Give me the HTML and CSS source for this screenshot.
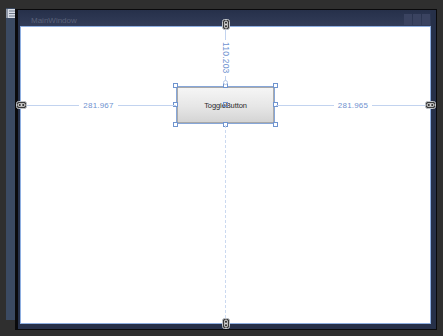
FILE: index.html
```html
<!DOCTYPE html>
<html>
<head>
<meta charset="utf-8">
<link rel="stylesheet" href="styles.css">
</head>
<body>
<div class="stage">
  <div class="side">
    <svg class="side-icon" width="9" height="9" viewBox="0 0 9 9">
      <rect x="0" y="0" width="9" height="9" fill="#d8dde6"/>
      <rect x="0" y="0" width="2" height="9" fill="#8d96a6"/>
      <line x1="3" y1="2" x2="9" y2="2" stroke="#6c7688" stroke-width="1"/>
      <line x1="3" y1="4.5" x2="9" y2="4.5" stroke="#6c7688" stroke-width="1"/>
      <line x1="3" y1="7" x2="9" y2="7" stroke="#6c7688" stroke-width="1"/>
    </svg>
  </div>
  <div class="window">
    <div class="titlebar">
      <span class="title">MainWindow</span>
      <div class="caption-btns"><i></i><i></i><i></i></div>
    </div>
    <div class="client">
      <div class="target">
        <div class="toggle">ToggleButton</div>
        <span class="h h-tl"></span><span class="h h-tc"></span><span class="h h-tr"></span>
        <span class="h h-ml"></span><span class="h h-mr"></span>
        <span class="h h-bl"></span><span class="h h-bc"></span><span class="h h-br"></span>
        <span class="h h-c"></span>
      </div>

      <div class="mline mline-left"><span class="mlabel">281.967</span></div>
      <div class="mline mline-right"><span class="mlabel">281.965</span></div>
      <div class="vline vline-top"><span class="vlabel">110.203</span></div>
      <span class="vdot vdot-top"></span>
      <div class="vline vline-bottom"></div>

      <svg class="anchor anchor-left" width="11" height="8" viewBox="0 0 11 8">
        <rect x="0.5" y="0.5" width="10" height="7" rx="2" fill="#3a3a3a" stroke="#bfc3c8"/>
        <rect x="2" y="2.5" width="4" height="3" rx="1.5" fill="none" stroke="#e6e6e6" stroke-width="1"/>
        <rect x="5" y="2.5" width="4" height="3" rx="1.5" fill="none" stroke="#e6e6e6" stroke-width="1"/>
      </svg>
      <svg class="anchor anchor-right" width="11" height="8" viewBox="0 0 11 8">
        <rect x="0.5" y="0.5" width="10" height="7" rx="2" fill="#3a3a3a" stroke="#bfc3c8"/>
        <rect x="2" y="2.5" width="4" height="3" rx="1.5" fill="none" stroke="#e6e6e6" stroke-width="1"/>
        <rect x="5" y="2.5" width="4" height="3" rx="1.5" fill="none" stroke="#e6e6e6" stroke-width="1"/>
      </svg>
    </div>
  </div>
  <svg class="anchor anchor-top" width="8" height="11" viewBox="0 0 8 11">
    <rect x="0.5" y="0.5" width="7" height="10" rx="2" fill="#3a3a3a" stroke="#bfc3c8"/>
    <rect x="2.5" y="2" width="3" height="4" rx="1.5" fill="none" stroke="#e6e6e6" stroke-width="1"/>
    <rect x="2.5" y="5" width="3" height="4" rx="1.5" fill="none" stroke="#e6e6e6" stroke-width="1"/>
  </svg>
  <svg class="anchor anchor-bottom" width="8" height="11" viewBox="0 0 8 11">
    <rect x="0.5" y="0.5" width="7" height="10" rx="2" fill="#3a3a3a" stroke="#bfc3c8"/>
    <rect x="2.5" y="2" width="3" height="4" rx="1.5" fill="none" stroke="#e6e6e6" stroke-width="1"/>
    <rect x="2.5" y="5" width="3" height="4" rx="1.5" fill="none" stroke="#e6e6e6" stroke-width="1"/>
  </svg>
</div>
</body>
</html>
```
FILE: styles.css
```css
html, body {
  margin: 0;
  padding: 0;
  background: #2f2f2f;
  width: 443px;
  height: 336px;
  overflow: hidden;
  font-family: "Liberation Sans", Arial, sans-serif;
}

.stage {
  position: relative;
  display: flex;
  align-items: flex-start;
  padding: 8px 0 0 6px;
  height: 336px;
  box-sizing: border-box;
}

.side {
  width: 9px;
  height: 312px;
  background: #3b4a62;
  flex: none;
}

.side-icon {
  display: block;
  margin-top: 1px;
}

.window {
  margin-top: 1px;
  width: 422px;
  height: 321px;
  box-sizing: border-box;
  border: 1px solid #0a0a0c;
  border-left-width: 3px;
  background: #263049;
  padding: 0 5px 5px 2px;
  display: flex;
  flex-direction: column;
}

.titlebar {
  height: 16px;
  flex: none;
  display: flex;
  align-items: center;
  justify-content: space-between;
  background: linear-gradient(#26304a, #323c58);
}

.title {
  font-size: 8px;
  color: #5a6179;
  margin-left: 11px;
  margin-top: 4px;
}

.caption-btns {
  display: flex;
  gap: 1px;
  margin-right: 1px;
  margin-top: 3px;
}

.caption-btns i {
  display: block;
  width: 8px;
  height: 11px;
  background: #3a4360;
}

.client {
  position: relative;
  flex: 1;
  background: #ffffff;
  border: 1px solid #8eaee0;
  display: flex;
  justify-content: center;
  padding-top: 59px;
}

.target {
  position: relative;
  width: 99px;
  height: 38px;
}

.toggle {
  box-sizing: border-box;
  width: 100%;
  height: 100%;
  border: 1px solid #86a6d8;
  background: linear-gradient(#f6f6f6, #e6e6e6 55%, #d3d3d3);
  box-shadow: inset 0 0 0 1px #a9a9a9;
  font-size: 7.5px;
  color: #2a2a2a;
  display: flex;
  align-items: center;
  justify-content: center;
  letter-spacing: -0.1px;
}

.h {
  position: absolute;
  width: 3px;
  height: 3px;
  border: 1px solid #6f94cf;
  background: #ffffff;
}

.h-tl { left: -3px; top: -3px; }
.h-tc { left: 47px; top: -3px; }
.h-tr { right: -3px; top: -3px; }
.h-ml { left: -3px; top: 16px; }
.h-mr { right: -3px; top: 16px; }
.h-bl { left: -3px; bottom: -3px; }
.h-bc { left: 47px; bottom: -3px; }
.h-br { right: -3px; bottom: -3px; }
.h-c { left: 47px; top: 16px; background: transparent; }

.mline {
  position: absolute;
  top: 78px;
  height: 1px;
  background: #c2d3ef;
  display: flex;
  align-items: center;
  justify-content: center;
}

.mline-left { left: 0; width: 155px; }
.mline-right { left: 255px; width: 154px; }

.mlabel {
  background: #ffffff;
  font-size: 8px;
  color: #6f92d0;
  padding: 0 4px;
  line-height: 9px;
  letter-spacing: 0.2px;
}

.vline {
  position: absolute;
  left: 204px;
  width: 1px;
}

.vline-top {
  top: 0;
  height: 58px;
  background: #c2d3ef;
  display: flex;
  align-items: flex-start;
  justify-content: center;
}

.vlabel {
  writing-mode: vertical-rl;
  background: #ffffff;
  font-size: 8.5px;
  color: #6f92d0;
  padding: 2px 0;
  margin-top: 13px;
  line-height: 9px;
  letter-spacing: 0.2px;
}

.vdot {
  position: absolute;
  left: 202px;
  top: 53px;
  width: 3px;
  height: 3px;
  border: 1px solid #b5c8e8;
  border-radius: 50%;
  background: #fff;
}

.vline-bottom {
  top: 98px;
  bottom: 0;
  border-left: 1px dashed #cbd9f0;
}

.anchor {
  position: absolute;
  display: block;
}

.anchor-left { left: -5px; top: 74px; }
.anchor-right { right: -6px; top: 74px; }
.anchor-top { left: 222px; top: 19px; }
.anchor-bottom { left: 222px; top: 318px; }
```
